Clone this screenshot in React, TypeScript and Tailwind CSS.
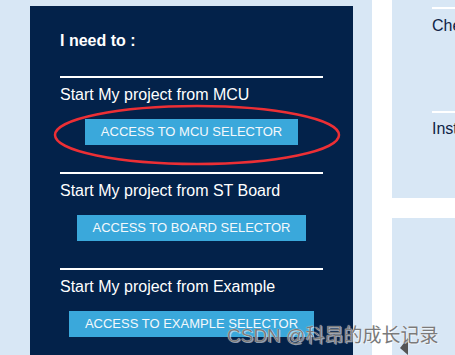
import React from "react";

const SECTIONS = [
  { title: "Start My project from MCU", button: "ACCESS TO MCU SELECTOR" },
  { title: "Start My project from ST Board", button: "ACCESS TO BOARD SELECTOR" },
  { title: "Start My project from Example", button: "ACCESS TO EXAMPLE SELECTOR" },
];

function Section({ title, button }: { title: string; button: string }) {
  return (
    <div className="pb-[27px]">
      <div className="h-[2px] bg-white" />
      <div className="mt-2 text-[16px] leading-[18px] text-white">{title}</div>
      <div className="mt-[15px] flex justify-center">
        <button className="h-[26px] px-4 bg-[#3aa8db] text-[13px] leading-[26px] text-[#f4f8fb] whitespace-nowrap">
          {button}
        </button>
      </div>
    </div>
  );
}

export default function App() {
  return (
    <div
      className="relative flex h-[355px] w-[455px] overflow-hidden bg-white"
      style={{ fontFamily: '"Liberation Sans", Arial, sans-serif' }}
    >
      {/* left column */}
      <div className="flex w-[372px] shrink-0 bg-[#d8e7f5] pl-[30px] pr-[19px] pt-[6px]">
        <div className="w-[323px] overflow-hidden bg-[#03224a] px-[30px] pt-[26px]">
          <div className="mb-[26px] text-[16px] font-bold leading-[18px] text-white">I need to :</div>
          {SECTIONS.map((s) => (
            <Section key={s.button} title={s.title} button={s.button} />
          ))}
        </div>
      </div>

      {/* right column */}
      <div className="ml-5 flex flex-1 flex-col gap-5 overflow-hidden">
        <div className="h-[198px] shrink-0 bg-[#d8e7f5] pl-[40px]">
          <div className="mt-[7px] h-[2px] bg-white" />
          <div className="mt-2 whitespace-nowrap text-[16px] leading-[18px] text-[#0f2346]">
            Check the latest news
          </div>
          <div className="mt-[76px] h-[2px] bg-white" />
          <div className="mt-[7px] whitespace-nowrap text-[16px] leading-[18px] text-[#0f2346]">
            Install or remove embedded software packages
          </div>
        </div>
        <div className="flex-1 bg-[#d8e7f5]" />
      </div>

      {/* red annotation ellipse */}
      <svg className="pointer-events-none absolute left-0 top-0" width="455" height="355">
        <ellipse cx="197" cy="135" rx="142" ry="29" fill="none" stroke="#ec2f35" strokeWidth="2.5" />
        <polygon points="408,338 400,348 408,355" fill="#555" />
      </svg>

      {/* watermark */}
      <div
        className="pointer-events-none absolute left-[227px] top-[325px] whitespace-nowrap text-[19px] leading-[22px] text-[#7a7a7a]"
        style={{
          fontFamily: '"Liberation Sans", "Noto Sans CJK SC", sans-serif',
          textShadow: "0 0 1px #fff, 1px 1px 0 rgba(255,255,255,0.5)",
        }}
      >
        CSDN @科昂的成长记录
      </div>
    </div>
  );
}
